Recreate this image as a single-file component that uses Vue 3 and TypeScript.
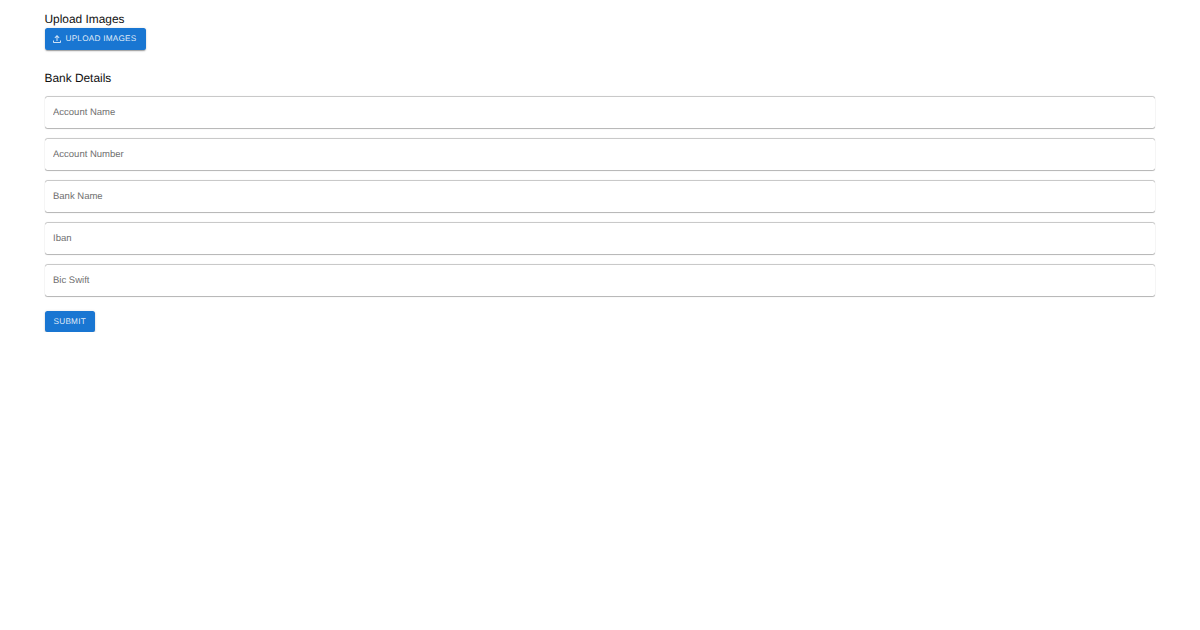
<script setup lang="ts">
const fields: string[] = ['Account Name', 'Account Number', 'Bank Name', 'Iban', 'Bic Swift']
</script>

<template>
  <main class="page">
    <h6 class="title">Upload Images</h6>
    <button type="button" class="btn upload">
      <svg class="icon" viewBox="0 0 24 24" aria-hidden="true"><path fill="currentColor" d="M18 15v3H6v-3H4v3c0 1.1.9 2 2 2h12c1.1 0 2-.9 2-2v-3h-2zM7 9l1.41 1.41L11 7.83V16h2V7.83l2.59 2.58L17 9l-5-5-5 5z"/></svg>
      <span>Upload Images</span>
    </button>
    <h6 class="title bank">Bank Details</h6>
    <form class="fields" @submit.prevent>
      <input v-for="f in fields" :key="f" class="field" type="text" :placeholder="f" :aria-label="f" />
      <button type="submit" class="btn submit">Submit</button>
    </form>
  </main>
</template>

<style scoped>
.page {
  padding: 10.5px 45.5px 0 44.5px;
  font-family: "Liberation Sans", Arial, sans-serif;
  text-rendering: geometricPrecision;
}
.title {
  margin: 0;
  font-size: 11.9px;
  font-weight: 400;
  line-height: 16px;
  color: #111;
}
.bank { margin-top: 20px; }
.btn {
  display: flex;
  align-items: center;
  justify-content: center;
  border: 0;
  border-radius: 2.5px;
  background: #1976d2;
  color: rgba(255,255,255,.88);
  font-family: inherit;
  font-size: 8.2px;
  font-weight: 400;
  letter-spacing: 0.25px;
  white-space: nowrap;
  text-transform: uppercase;
  text-rendering: geometricPrecision;
  box-shadow: 0 1.5px 1px -1px rgba(0,0,0,.2), 0 1px 1.5px 0 rgba(0,0,0,.14), 0 .5px 2.5px 0 rgba(0,0,0,.12);
}
.upload {
  justify-content: flex-start;
  margin-top: 1.5px;
  width: 101px;
  height: 21.5px;
  padding: 0 0 0 6px;
  gap: 3px;
}
.icon { width: 12px; height: 12px; flex: none; opacity: .9; }
.fields {
  display: flex;
  flex-direction: column;
  align-items: flex-start;
  gap: 11px;
  margin-top: 11.5px;
}
.field {
  box-sizing: border-box;
  width: 100%;
  height: 31px;
  padding: 0 8.5px;
  border: 0;
  border-radius: 2.5px;
  outline: 0;
  background: #fff;
  font-family: inherit;
  font-size: 9.5px;
  color: #000;
  text-rendering: geometricPrecision;
  box-shadow: 0 0.5px 0.8px 0 rgba(0,0,0,.28), 0 -0.5px 0.8px 0 rgba(0,0,0,.2), 0 0 1px 0 rgba(0,0,0,.08);
}
.field::placeholder { color: #707070; opacity: 1; }
.submit {
  margin-top: 3.5px;
  width: 50.5px;
  height: 21px;
  padding: 0;
}
</style>
